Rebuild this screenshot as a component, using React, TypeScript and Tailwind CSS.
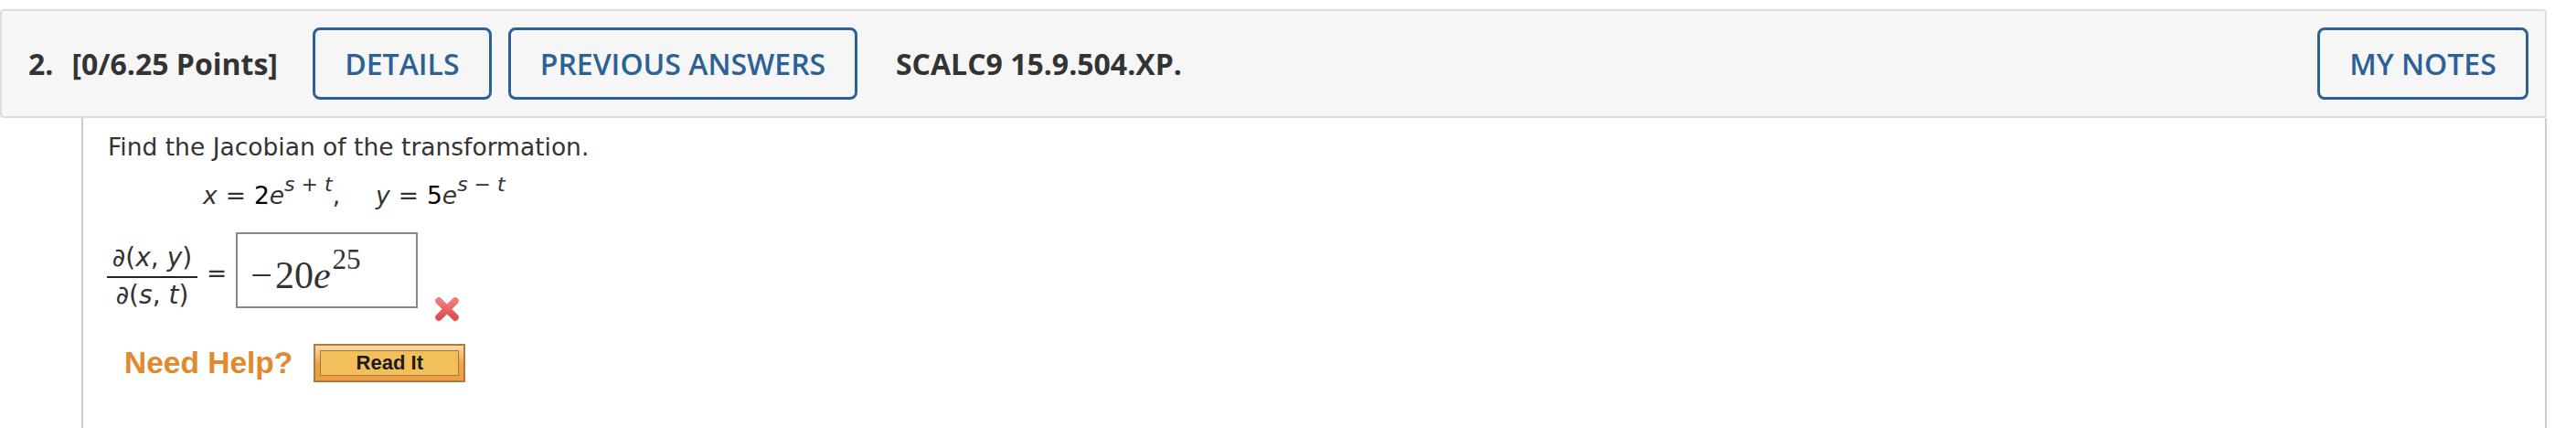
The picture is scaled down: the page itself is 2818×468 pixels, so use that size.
export default function App() {
  const btn =
    "h-[79px] flex items-center justify-center border-[3px] border-[#2b6196] rounded-[8px] text-[#2b6196] font-semibold bg-[#f6f6f6]";
  return (
    <div className="w-[2818px] h-[468px] overflow-hidden bg-white pt-[10px]">
      <div className="w-[2786px] h-[119px] flex items-center border-2 border-[#dddddd] rounded-[4px] bg-[#f6f6f6] pl-[29px] pr-[18px] font-['Open_Sans',sans-serif] text-[32px] leading-none">
        <span className="font-bold text-[#333333]">2.</span>
        <span className="ml-[20px] font-bold text-[#333333]">[0/6.25 Points]</span>
        <div className={`${btn} ml-[38px] w-[196px]`}>DETAILS</div>
        <div className={`${btn} ml-[18px] w-[382px]`}>PREVIOUS ANSWERS</div>
        <span className="ml-[42px] font-bold text-[#333333]">SCALC9 15.9.504.XP.</span>
        <div className={`${btn} ml-auto w-[231px]`}>MY NOTES</div>
      </div>
      <div className="ml-[89px] w-[2697px] h-[340px] border-x-2 border-[#cccccc] pl-[27px] pt-[17px] font-['DejaVu_Sans',sans-serif] text-[26.5px] text-[#333333]">
        <div className="leading-[30px]">Find the Jacobian of the transformation.</div>
        <div className="mt-[23px] ml-[104px] flex items-baseline leading-[30px]">
          <i>x</i>
          <span className="mx-[9px]">=</span>
          <span className="text-black">2</span>
          <i>e</i>
          <sup className="text-[22px] relative top-[-14px]">
            <i>s</i> + <i>t</i>
          </sup>
          <span>,</span>
          <i className="ml-[39px]">y</i>
          <span className="mx-[9px]">=</span>
          <span className="text-black">5</span>
          <i>e</i>
          <sup className="text-[22px] relative top-[-14px]">
            <i>s</i> − <i>t</i>
          </sup>
        </div>
        <div className="mt-[25px] h-[83px] flex items-start">
          <div className="-ml-[1px] mt-[13px] w-[99px] flex flex-col items-center text-[28px]">
            <div className="leading-[30px] whitespace-nowrap">∂(<i>x</i>, <i>y</i>)</div>
            <div className="w-full h-[2px] bg-[#222222] mt-[5px]"></div>
            <div className="leading-[30px] mt-[4px] whitespace-nowrap">∂(<i>s</i>, <i>t</i>)</div>
          </div>
          <span className="ml-[10px] mt-[30px] leading-[30px]">=</span>
          <div className="ml-[10px] w-[199px] h-[83px] border-2 border-[#888888] bg-white pl-[14px] pt-[24px] font-['Liberation_Serif',serif] text-[42px] leading-[42px] text-[#333333] whitespace-nowrap">
            <span className="mr-[3px]">−</span>20<i>e</i>
            <span className="relative top-[-21px] text-[31px] ml-[2px]">25</span>
          </div>
          <svg className="ml-[17px] mt-[69px]" width="30" height="30" viewBox="0 0 30 30">
            <defs>
              <linearGradient id="rx" x1="0" y1="0" x2="0" y2="1">
                <stop offset="0" stopColor="#f27b7b" />
                <stop offset="1" stopColor="#dc4f52" />
              </linearGradient>
            </defs>
            <path d="M6 6 L24 24 M24 6 L6 24" stroke="url(#rx)" strokeWidth="7.5" strokeLinecap="round" fill="none" />
          </svg>
        </div>
        <div className="mt-[35px] ml-[18px] flex items-center">
          <span className="font-['Liberation_Sans',sans-serif] font-bold text-[33.5px] text-[#e2892f]">Need Help?</span>
          <div className="ml-[23px] w-[166px] h-[42px] border-2 border-[#b07a3a] bg-gradient-to-b from-[#f9dca6] via-[#eea44a] to-[#ec9e42] p-[5px]">
            <div className="h-full border border-[#a07a3c] bg-[#f2bf5b] flex items-center justify-center font-['Liberation_Sans',sans-serif] font-bold text-[22px] text-[#1c1c1c] leading-none">
              Read It
            </div>
          </div>
        </div>
      </div>
    </div>
  );
}
